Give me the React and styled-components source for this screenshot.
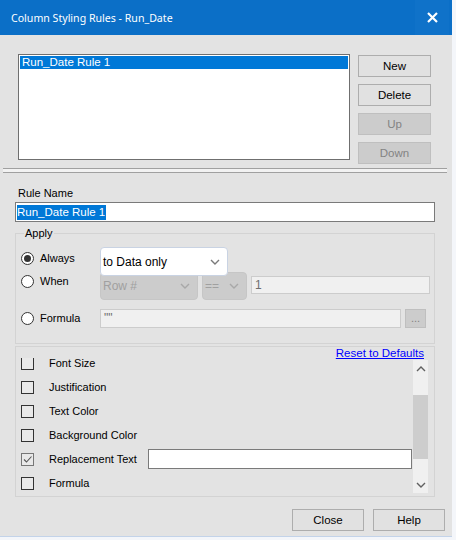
import React, { useEffect, useRef } from 'react';
import styled, { createGlobalStyle } from 'styled-components';

const GlobalStyle = createGlobalStyle`
    html, body {
        margin: 0;
        padding: 0;
        background: #f4f6fa;
    }
    * {
        box-sizing: border-box;
    }
`

const options = [
    { label: 'Font Size' },
    { label: 'Justification' },
    { label: 'Text Color' },
    { label: 'Background Color' },
    { label: 'Replacement Text', checked: true, input: true },
    { label: 'Formula' },
];

const Chevron = ({ up, color = '#7a7a7a' }) => (
    <svg width="10" height="6" viewBox="0 0 10 6">
        <polyline
            points={up ? '1,5 5,1 9,5' : '1,1 5,5 9,1'}
            fill="none"
            stroke={color}
            strokeWidth="1.4"
        />
    </svg>
);

const App = () => {
    const listRef = useRef(null);

    useEffect(() => {
        // list is scrolled a little, first row partly hidden
        if (listRef.current) listRef.current.scrollTop = 7;
    }, []);

    return (
        <>
            <GlobalStyle />
            <Dialog>
                <TitleBar>
                    <Title>Column Styling Rules - Run_Date</Title>
                    <CloseBox>
                        <svg width="11" height="11" viewBox="0 0 11 11">
                            <path d="M1 1 L10 10 M10 1 L1 10" stroke="#fff" strokeWidth="2.2" />
                        </svg>
                    </CloseBox>
                </TitleBar>

                <TopSection>
                    <RuleList>
                        <RuleItem $selected>Run_Date Rule 1</RuleItem>
                    </RuleList>
                    <ButtonColumn>
                        <Button>New</Button>
                        <Button>Delete</Button>
                        <Button disabled>Up</Button>
                        <Button disabled>Down</Button>
                    </ButtonColumn>
                </TopSection>

                <Separator />

                <Label>Rule Name</Label>
                <NameInput>
                    <Selected>Run_Date Rule 1</Selected>
                </NameInput>

                <GroupBox>
                    <Legend>Apply</Legend>
                    <ApplyRow $height={29}>
                        <RadioCell $offset={5}>
                            <Radio $checked />
                            <span>Always</span>
                        </RadioCell>
                        <Dropdown $width={128}>
                            <span>to Data only</span>
                            <Chevron />
                        </Dropdown>
                    </ApplyRow>
                    <ApplyRow $height={28} $overlap>
                        <RadioCell $offset={3}>
                            <Radio />
                            <span>When</span>
                        </RadioCell>
                        <Dropdown $width={98} disabled>
                            <span>Row #</span>
                            <Chevron color="#a8a8a8" />
                        </Dropdown>
                        <Dropdown $width={45} disabled>
                            <span>==</span>
                            <Chevron color="#a8a8a8" />
                        </Dropdown>
                        <Field $width={179} $top={4}>1</Field>
                    </ApplyRow>
                    <ApplyRow $height={19} $gap={9}>
                        <RadioCell $offset={3}>
                            <Radio />
                            <span>Formula</span>
                        </RadioCell>
                        <Field $width={301}>{'""'}</Field>
                        <SmallButton>...</SmallButton>
                    </ApplyRow>
                </GroupBox>

                <OptionsBox>
                    <LinkRow>
                        <ResetLink href="#">Reset to Defaults</ResetLink>
                    </LinkRow>
                    <ListFrame>
                        <OptionViewport ref={listRef}>
                            {options.map(opt => (
                                <OptionRow key={opt.label}>
                                    <Checkbox $checked={opt.checked}>
                                        {opt.checked && (
                                            <svg width="11" height="11" viewBox="0 0 11 11">
                                                <polyline points="2,5.5 4.5,8 9.5,2.5" fill="none" stroke="#555" strokeWidth="1.1" />
                                            </svg>
                                        )}
                                    </Checkbox>
                                    <OptionLabel>{opt.label}</OptionLabel>
                                    {opt.input && <TextInput />}
                                </OptionRow>
                            ))}
                        </OptionViewport>
                        <ScrollBar>
                            <ScrollArrow><Chevron up color="#606060" /></ScrollArrow>
                            <ScrollTrack>
                                <ScrollThumb />
                            </ScrollTrack>
                            <ScrollArrow><Chevron color="#606060" /></ScrollArrow>
                        </ScrollBar>
                    </ListFrame>
                </OptionsBox>

                <Footer>
                    <Button $width={72}>Close</Button>
                    <Button $width={72}>Help</Button>
                </Footer>
            </Dialog>
        </>
    )
}

export default App;

const Dialog = styled.div`
    width: 452px;
    height: 537px;
    background: #e3e3e3;
    border-bottom: 1px solid #c3d3e9;
    font-family: "Liberation Sans", Arial, sans-serif;
    font-size: 11px;
    color: #000;
    display: flex;
    flex-direction: column;
`

const TitleBar = styled.div`
    height: 35px;
    background: #0b6fc7;
    display: flex;
    align-items: center;
    padding-left: 11px;
`

const Title = styled.div`
    flex: 1;
    color: #fff;
    font-family: "Noto Sans", "Open Sans", sans-serif;
    font-size: 10.6px;
`

const CloseBox = styled.div`
    width: 34px;
    height: 35px;
    display: flex;
    align-items: center;
    justify-content: center;
    background: #0f72c9;
    margin-right: 3px;
`

const TopSection = styled.div`
    display: flex;
    margin-top: 19px;
    padding-left: 18px;
    gap: 8px;
`

const RuleList = styled.div`
    width: 332px;
    height: 106px;
    background: #fff;
    border: 1px solid #6f6f6f;
    padding: 1px;
`

const RuleItem = styled.div`
    height: 13px;
    line-height: 13px;
    padding-left: 2px;
    font-size: 11.5px;
    background: ${p => p.$selected ? '#0078d7' : 'transparent'};
    color: ${p => p.$selected ? '#fff' : '#000'};
`

const ButtonColumn = styled.div`
    display: flex;
    flex-direction: column;
    gap: 7px;
    margin-top: 1px;
`

const Button = styled.button`
    width: ${p => p.$width || 73}px;
    height: 22px;
    padding: 0;
    font-family: "Liberation Sans", Arial, sans-serif;
    font-size: 11.5px;
    color: #000;
    background: #e1e1e1;
    border: 1px solid #adadad;

    &:disabled {
        background: #cccccc;
        border-color: #bfbfbf;
        color: #838383;
    }
`

const Separator = styled.div`
    height: 5px;
    margin: 4px 5px 0 3px;
    border-top: 1px solid #a0a0a0;
    border-bottom: 1px solid #a0a0a0;
    background: #f2f2f2;
`

const Label = styled.div`
    margin: 13px 0 0 18px;
    line-height: 14px;
`

const NameInput = styled.div`
    margin: 2px 0 0 15px;
    width: 420px;
    height: 20px;
    background: #fff;
    border: 1px solid #7a7a7a;
    display: flex;
    align-items: center;
    padding-left: 1px;
`

const Selected = styled.span`
    background: #0078d7;
    color: #fff;
    line-height: 15px;
    padding-right: 1px;
    font-size: 11.5px;
`

const GroupBox = styled.fieldset`
    margin: 4px 17px 0 15px;
    padding: 0 0 15px 5px;
    border: 1px solid #d3d3d3;
    min-width: 0;
`

const Legend = styled.legend`
    padding: 0 1px;
    margin-left: 3px;
    line-height: 14px;
`

const ApplyRow = styled.div`
    display: flex;
    align-items: flex-start;
    height: ${p => p.$height}px;
    margin-top: ${p => p.$overlap ? -4 : (p.$gap ?? 7)}px;
    gap: 4px;
`

const RadioCell = styled.div`
    width: 75px;
    display: flex;
    align-items: center;
    gap: 6px;
    margin-top: ${p => p.$offset}px;
    line-height: 13px;
`

const Radio = styled.span`
    position: relative;
    width: 13px;
    height: 13px;
    flex: none;
    border: 1px solid #333;
    border-radius: 50%;
    background: #fff;

    &::after {
        content: '';
        display: ${p => p.$checked ? 'block' : 'none'};
        position: absolute;
        left: 2px;
        top: 2px;
        width: 7px;
        height: 7px;
        border-radius: 50%;
        background: #333;
    }
`

const Dropdown = styled.div`
    width: ${p => p.$width}px;
    height: 100%;
    border-radius: 4px;
    display: flex;
    align-items: center;
    justify-content: space-between;
    padding: 0 7px 0 2px;
    background: ${p => p.disabled ? '#cccccc' : '#fff'};
    border: 1px solid ${p => p.disabled ? '#c6c6c6' : '#c9d3e3'};
    color: ${p => p.disabled ? '#a0a0a0' : '#000'};
    position: relative;
    z-index: ${p => p.disabled ? 0 : 1};
    font-size: 12px;
`

const Field = styled.div`
    width: ${p => p.$width}px;
    height: ${p => p.$top ? 18 : 19}px;
    margin-top: ${p => p.$top || 0}px;
    background: #f0f0f0;
    border: 1px solid #cccccc;
    color: #6d6d6d;
    padding-left: 3px;
    line-height: 16px;
    font-size: 12px;
`

const SmallButton = styled.div`
    width: 21px;
    height: 19px;
    background: #cccccc;
    border: 1px solid #bfbfbf;
    color: #838383;
    text-align: center;
    line-height: 17px;
`

const OptionsBox = styled.div`
    margin: 2px 17px 0 15px;
    height: 151px;
    border: 1px solid #d3d3d3;
    padding: 0 6px 3px 0;
    display: flex;
    flex-direction: column;
`

const LinkRow = styled.div`
    display: flex;
    justify-content: flex-end;
    height: 11px;
    line-height: 13px;
    margin-right: 4px;
`

const ResetLink = styled.a`
    color: #0000ff;
    text-decoration: underline;
    font-size: 11.5px;
`

const ListFrame = styled.div`
    flex: 1;
    display: flex;
    min-height: 0;
`

const OptionViewport = styled.div`
    flex: 1;
    overflow: hidden;
`

const OptionRow = styled.div`
    height: 24px;
    display: flex;
    align-items: center;
    padding-left: 5px;
`

const Checkbox = styled.span`
    width: 13px;
    height: 13px;
    flex: none;
    border: 1px solid ${p => p.$checked ? '#777' : '#333'};
    background: #e9e9e9;
    display: flex;
    align-items: center;
    justify-content: center;
`

const OptionLabel = styled.span`
    width: 99px;
    margin-left: 15px;
`

const TextInput = styled.div`
    width: 264px;
    height: 20px;
    background: #fff;
    border: 1px solid #7a7a7a;
`

const ScrollBar = styled.div`
    width: 15px;
    display: flex;
    flex-direction: column;
    background: #f0f0f0;
    margin-top: 2px;
`

const ScrollArrow = styled.div`
    height: 17px;
    display: flex;
    align-items: center;
    justify-content: center;
`

const ScrollTrack = styled.div`
    flex: 1;
    padding: 18px 0 17px;
    display: flex;
    flex-direction: column;
`

const ScrollThumb = styled.div`
    flex: 1;
    background: #cdcdcd;
`

const Footer = styled.div`
    display: flex;
    justify-content: flex-end;
    gap: 9px;
    margin: 12px 7px 0 0;
`
